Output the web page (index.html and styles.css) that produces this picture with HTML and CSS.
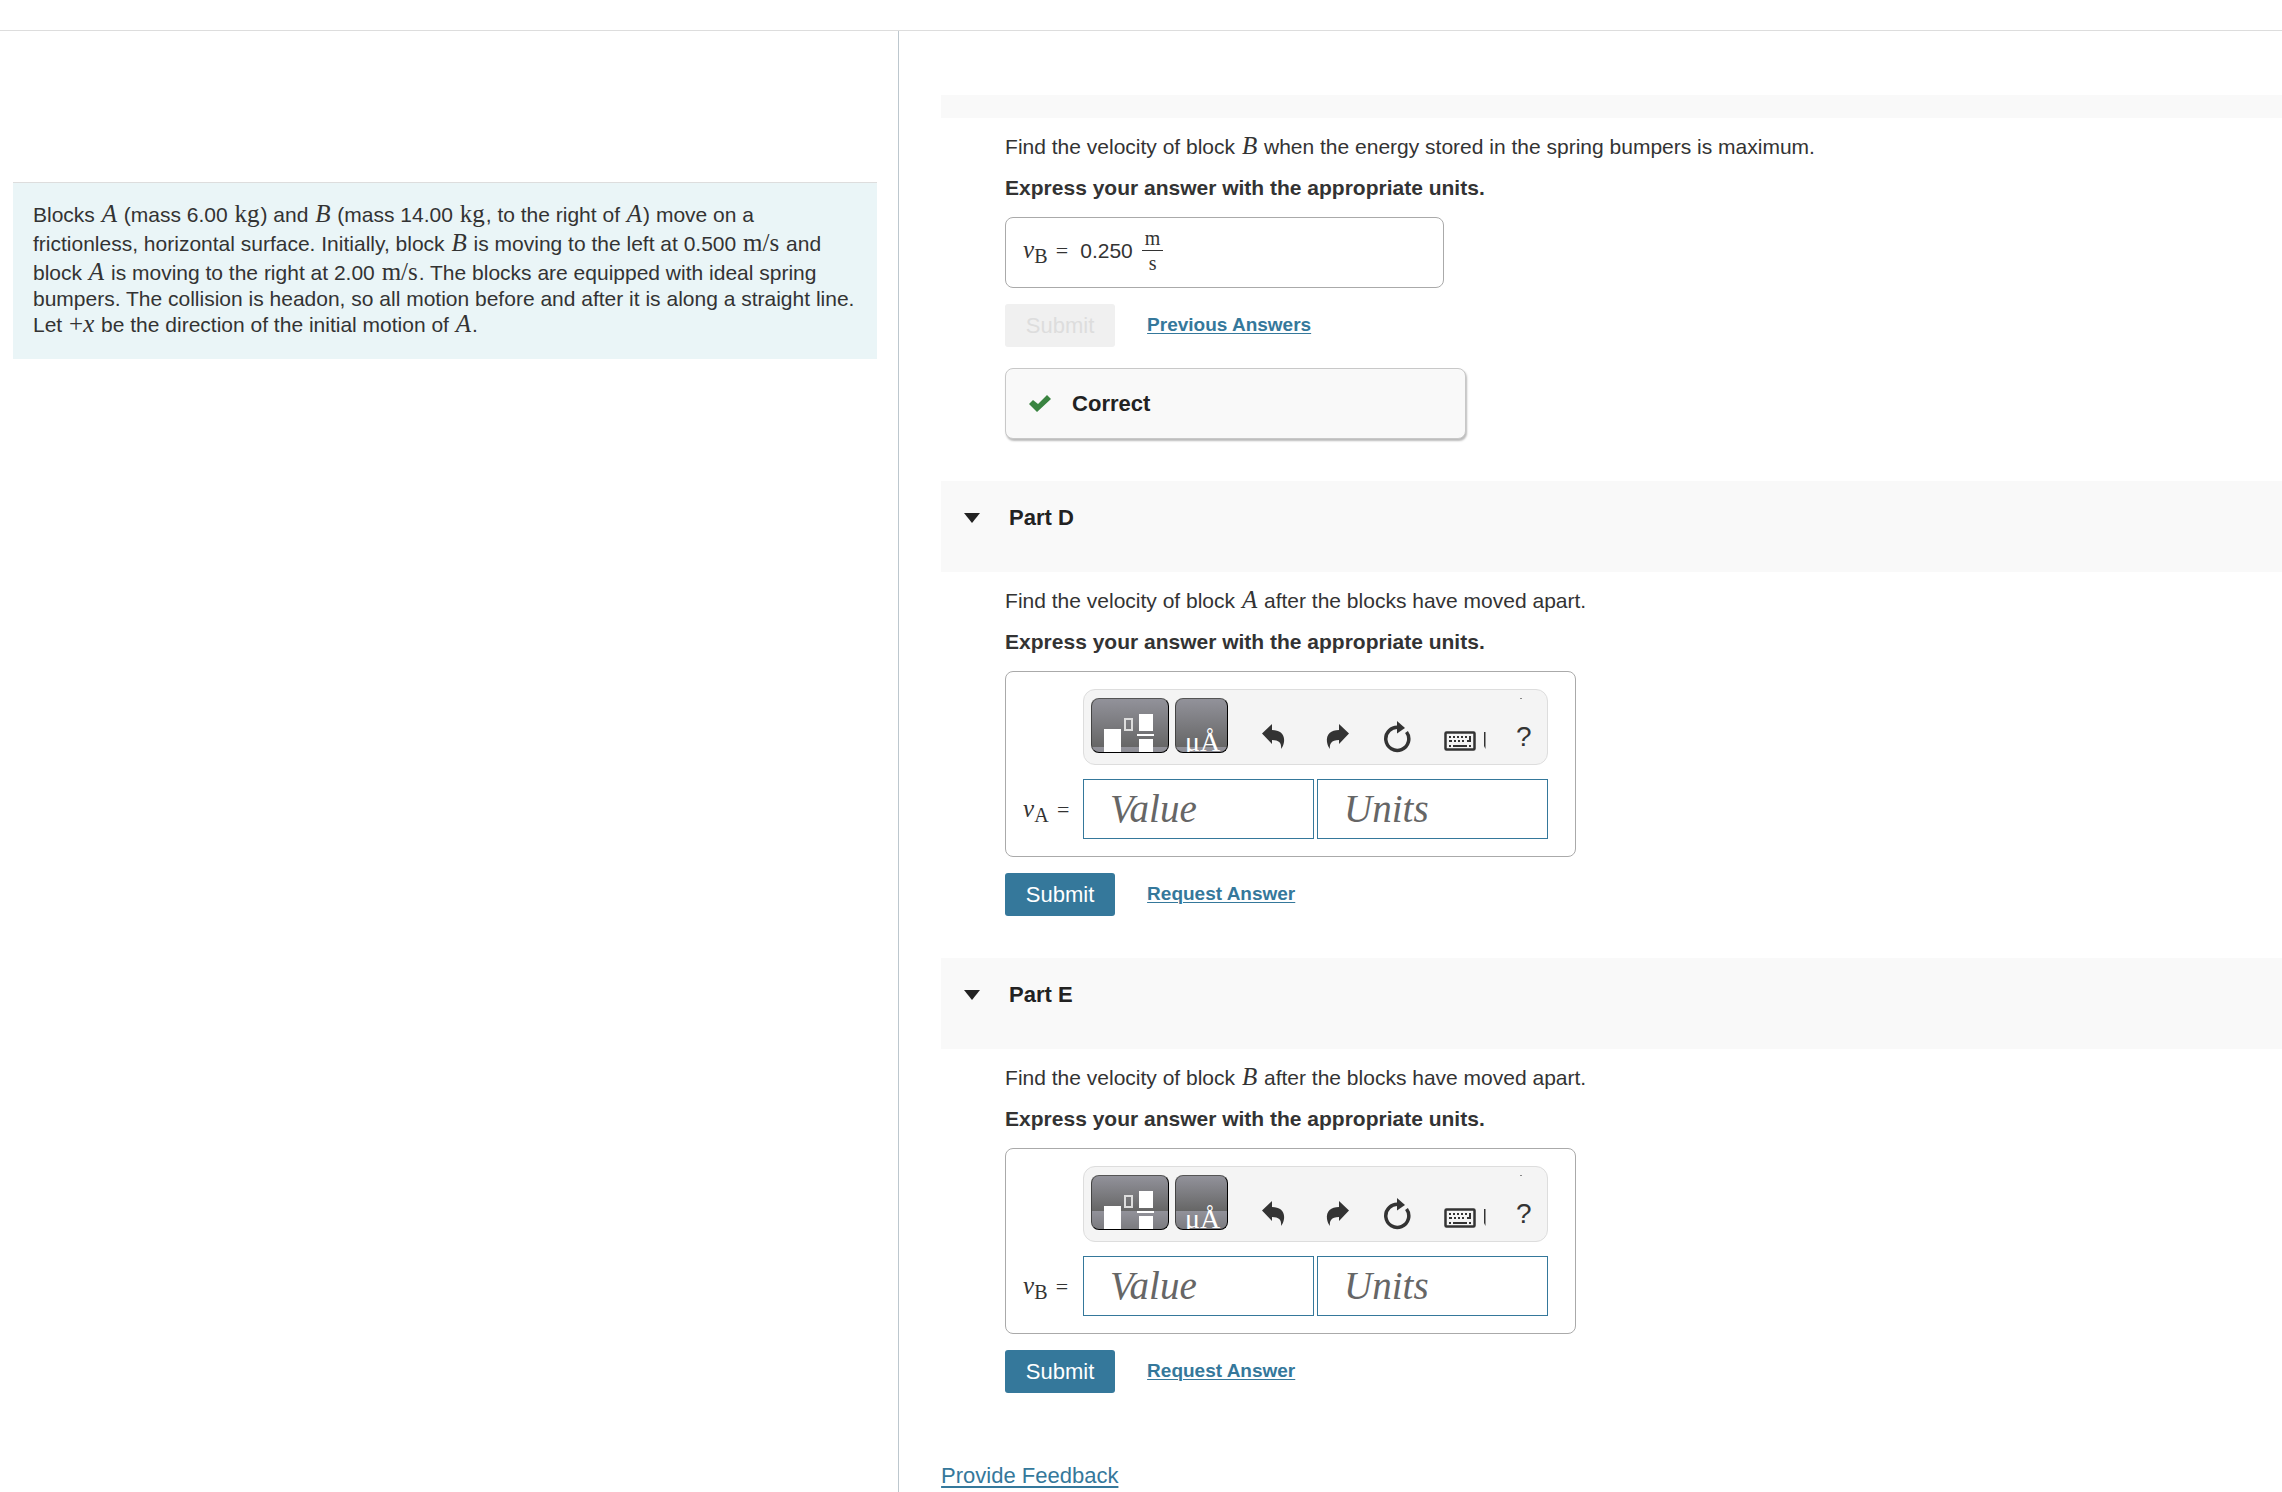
FILE: index.html
```
<!DOCTYPE html>
<html lang="en">
<head>
    <meta charset="utf-8">
    <title>Spring Bumpers</title>
    <link rel="stylesheet" href="styles.css">
</head>
<body>
    <!-- shared icons -->
    <svg class="defs" width="0" height="0" aria-hidden="true">
        <symbol id="i-template" viewBox="0 0 76 53">
            <path fill="#fff" d="M12 30h17v23H12zM47 15h14v17H47zM45 35h17v2H45zM47 40h14v13H47z"/>
            <path fill="none" stroke="#ddd" stroke-width="2" d="M33 20h7v11h-7z"/>
        </symbol>
        <symbol id="i-undo" viewBox="0 0 24 32">
            <path d="M0 12.500L10 3v6c8 0 13 4 12 12-.4 3-1.500 5-3 7 .6-5-1-9-9-9v4z"/>
        </symbol>
        <symbol id="i-redo" viewBox="0 0 24 32">
            <path d="M23 12.500L13 3v6C5 9 0 13 1 21c.4 3 1.500 5 3 7-.6-5 1-9 9-9v4z"/>
        </symbol>
        <symbol id="i-reset" viewBox="0 0 28 32">
            <path fill="none" stroke="#333" stroke-width="3.500" d="M15 6.500A11.500 11.500 0 1 0 22.500 11"/>
            <path d="M13 0l8 7-8 5.500z"/>
        </symbol>
        <symbol id="i-keyboard" viewBox="0 0 42 32">
            <rect x="1.500" y="11.500" width="29" height="17" rx="1" fill="none" stroke="#333" stroke-width="2.500"/>
            <path d="M5 15h2v2H5zM9 15h2v2H9zM13 15h2v2h-2zM17 15h2v2h-2zM21 15h2v2h-2zM25 15h2v6h-4v-2h2zM5 19h3v2H5zM10 19h2v2h-2zM14 19h2v2h-2zM18 19h2v2h-2zM5 24h2v2H5zM9 24h14v2H9zM25 24h2v2h-2z"/>
            <path d="M40 11h1.500v17l-1.500-3z"/>
        </symbol>
    </svg>

    <header class="topbar"></header>
    <main class="page">
        <aside class="side">
            <p class="intro">
                Blocks <i class="m">A</i> (mass 6.00 <span class="m">kg</span>) and <i class="m">B</i> (mass 14.00 <span class="m">kg</span>, to the right of <i class="m">A</i>) move on a frictionless, horizontal surface. Initially, block <i class="m">B</i> is moving to the left at 0.500 <span class="m unit">m/s</span> and block <i class="m">A</i> is moving to the right at 2.00 <span class="m unit">m/s</span>. The blocks are equipped with ideal spring bumpers. The collision is headon, so all motion before and after it is along a straight line. Let <span class="m">+<i>x</i></span> be the direction of the initial motion of <i class="m">A</i>.
            </p>
        </aside>

        <div class="content">
            <section>
                <div class="strip"></div>
                <div class="part">
                    <p>Find the velocity of block <i class="m">B</i> when the energy stored in the spring bumpers is maximum.</p>
                    <p class="hint">Express your answer with the appropriate units.</p>
                    <div class="answer">
                        <span class="var"><i>v</i><sub>B</sub> <span class="eq">=</span></span>
                        <span class="num">0.250</span>
                        <span class="frac"><span>m</span><span>s</span></span>
                    </div>
                    <div class="actions">
                        <button class="submit" type="button" disabled>Submit</button>
                        <a class="link" href="#">Previous Answers</a>
                    </div>
                    <div class="correct">
                        <svg width="24" height="20" viewBox="0 0 24 20" aria-hidden="true"><path fill="#3a8441" d="M1 10l4-4 5 4 9-9 4 4L9 18z"/></svg>
                        <span>Correct</span>
                    </div>
                </div>
            </section>

            <section>
                <h2 class="part-head"><svg width="18" height="12" viewBox="0 0 18 12" aria-hidden="true"><path fill="#222" d="M1 1h16L9 11z"/></svg>Part D</h2>
                <div class="part">
                    <p>Find the velocity of block <i class="m">A</i> after the blocks have moved apart.</p>
                    <p class="hint">Express your answer with the appropriate units.</p>
                    <div class="editor">
                        <div class="toolbar">
                            <button class="key template" type="button" aria-label="Templates"><svg width="76" height="53"><use href="#i-template"/></svg></button>
                            <button class="key symbols" type="button">μÅ</button>
                            <div class="tools">
                                <button type="button" aria-label="Undo"><svg class="undo" width="24" height="32"><use href="#i-undo"/></svg></button>
                                <button type="button" aria-label="Redo"><svg class="redo" width="24" height="32"><use href="#i-redo"/></svg></button>
                                <button type="button" aria-label="Reset"><svg width="28" height="32"><use href="#i-reset"/></svg></button>
                                <button type="button" aria-label="Keyboard"><svg width="42" height="32"><use href="#i-keyboard"/></svg></button>
                                <button class="help" type="button">?</button>
                            </div>
                        </div>
                        <label class="var" for="valueD"><i>v</i><sub>A</sub> <span class="eq">=</span></label>
                        <div class="fields">
                            <input id="valueD" type="text" placeholder="Value">
                            <input id="unitsD" type="text" placeholder="Units" aria-label="Units">
                        </div>
                    </div>
                    <div class="actions">
                        <button class="submit" type="button">Submit</button>
                        <a class="link" href="#">Request Answer</a>
                    </div>
                </div>
            </section>

            <section>
                <h2 class="part-head"><svg width="18" height="12" viewBox="0 0 18 12" aria-hidden="true"><path fill="#222" d="M1 1h16L9 11z"/></svg>Part E</h2>
                <div class="part">
                    <p>Find the velocity of block <i class="m">B</i> after the blocks have moved apart.</p>
                    <p class="hint">Express your answer with the appropriate units.</p>
                    <div class="editor">
                        <div class="toolbar">
                            <button class="key template short" type="button" aria-label="Templates"><svg width="76" height="53"><use href="#i-template"/></svg></button>
                            <button class="key symbols short" type="button">μÅ</button>
                            <div class="tools">
                                <button type="button" aria-label="Undo"><svg class="undo" width="24" height="32"><use href="#i-undo"/></svg></button>
                                <button type="button" aria-label="Redo"><svg class="redo" width="24" height="32"><use href="#i-redo"/></svg></button>
                                <button type="button" aria-label="Reset"><svg width="28" height="32"><use href="#i-reset"/></svg></button>
                                <button type="button" aria-label="Keyboard"><svg width="42" height="32"><use href="#i-keyboard"/></svg></button>
                                <button class="help" type="button">?</button>
                            </div>
                        </div>
                        <label class="var" for="valueE"><i>v</i><sub>B</sub> <span class="eq">=</span></label>
                        <div class="fields">
                            <input id="valueE" type="text" placeholder="Value">
                            <input id="unitsE" type="text" placeholder="Units" aria-label="Units">
                        </div>
                    </div>
                    <div class="actions">
                        <button class="submit" type="button">Submit</button>
                        <a class="link" href="#">Request Answer</a>
                    </div>
                </div>
            </section>

            <a class="feedback" href="#">Provide Feedback</a>
        </div>
    </main>
</body>
</html>
```

FILE: styles.css
```
*{box-sizing: border-box;margin: 0;padding: 0;}
body{display: flex;flex-direction: column;min-height: 100vh;background: #fff;color: #333;font: 21px/26px "Liberation Sans", Arial, sans-serif;}
button{border: 0;background: none;color: inherit;font: inherit;cursor: pointer;}
a{color: #35789b;text-decoration-thickness: 2px;text-underline-offset: 3px;}
svg{display: block;}
.defs{position: absolute;}

/* layout */
.topbar{height: 31px;border-bottom: 1px solid #ddd;}
.page{display: flex;flex: 1;}
.side{width: 39.4%;padding: 151px 21px 0 13px;border-right: 1px solid #bdc7ce;}
.content{flex: 1;padding: 64px 0 0 42px;}
.intro{padding: 19px 16px 21px 20px;border-top: 1px solid #ddd;background: #eaf5f7;}
.strip{height: 23px;background: #f9f9f9;}
.part{padding: 16px 0 42px 64px;}
.part-head{display: flex;align-items: center;gap: 28px;height: 91px;padding: 0 22px 17px;background: #f9f9f9;color: #222;font-size: 22px;}
.hint{margin: 15px 0 16px;font-weight: bold;}

/* math */
.m{padding: 0 1px;font-family: "Liberation Serif", serif;font-size: 25px;line-height: 24px;}
.unit{line-height: 29px;}
.var{font: 25px/30px "Liberation Serif", serif;}
.var sub{font-size: 20px;line-height: 1;vertical-align: -5px;}
.eq{margin-left: 2px;font-size: 22px;}
.frac{display: flex;flex-direction: column;align-items: center;font: 20px/24px "Liberation Serif", serif;}
.frac span{padding: 0 3px;}
.frac span:first-child{border-bottom: 1px solid #333;}

.answer{display: flex;align-items: center;width: 439px;height: 71px;padding: 0 17px 4px;border: 1px solid #aaa;border-radius: 8px;}
.num{margin: 0 9px 0 12px;}
.actions{display: flex;align-items: center;gap: 32px;margin-top: 16px;}
.submit{width: 110px;height: 43px;border-radius: 3px;background: #35789b;color: #fff;font-size: 22px;}
.submit:disabled{background: #f0f0f0;color: #ddd;}
.link{padding-bottom: 2px;font-size: 19px;font-weight: bold;text-decoration-thickness: 1px;text-underline-offset: 2px;}
.correct{display: flex;align-items: center;gap: 20px;width: 461px;height: 71px;margin-top: 21px;padding: 0 22px;border: 1px solid #c8c8c8;border-radius: 8px;background: #f9f9f9;box-shadow: 1px 2px 2px #bbb;color: #222;font-size: 22px;font-weight: bold;}

/* answer editor */
.editor{display: grid;grid-template-columns: 60px 465px;align-items: center;row-gap: 14px;width: 571px;padding: 17px;border: 1px solid #aaa;border-radius: 8px;}
.toolbar{grid-column: 2;display: flex;gap: 6px;height: 76px;padding: 8px 7px 11px;border: 1px solid #ddd;border-radius: 12px;background: #f4f4f4;}
.key{height: 55px;border: 1px solid #000;border-top-color: #555;border-left-color: #444;border-radius: 8px;background: linear-gradient(#92929a, #666) 0 0 / 100% 48px;overflow: hidden;}
.short{background-size: 100% 35px;}
.template{width: 78px;}
.symbols{display: flex;align-items: flex-start;width: 53px;padding: 28px 0 0 9px;color: #fff;font: 28px/30px "Liberation Serif", serif;}
.tools{display: flex;align-items: flex-end;gap: 32px;padding-left: 28px;fill: #333;}
.undo{margin-right: 8px;}
.redo{margin-right: 2px;}
.help{position: relative;width: 14px;margin-left: -2px;font-size: 28px;line-height: 32px;}
.help::before{content: "";position: absolute;top: -23px;left: 4px;width: 2px;height: 1px;background: #888;}
.fields{display: flex;gap: 3px;}
.fields input{flex: 1;width: 0;height: 60px;padding: 0 26px 2px;border: 1px solid #35789b;background: #fff;color: #333;font: 39px "Liberation Serif", serif;}
.fields input::placeholder{color: #666;font-style: italic;opacity: 1;}
.feedback{display: inline-block;margin-top: 28px;font-size: 22px;}
```
